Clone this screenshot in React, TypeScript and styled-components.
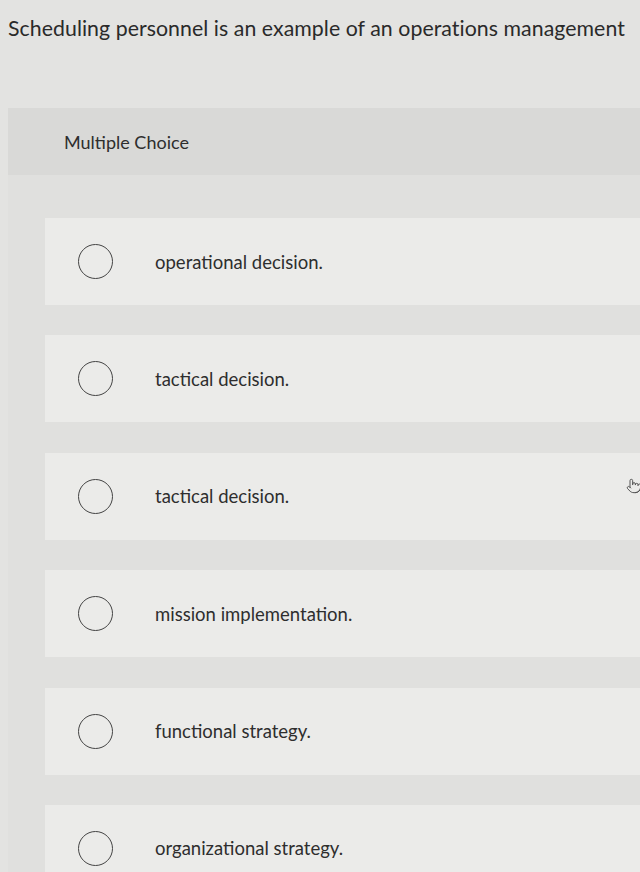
import React from "react";
import styled, { createGlobalStyle } from "styled-components";
import { Pointer } from "lucide-react";

const GlobalStyle = createGlobalStyle`
  html, body {
    margin: 0;
    padding: 0;
    background: #e3e3e1;
  }
  body {
    font-family: Lato, "Open Sans", sans-serif;
    color: #2a2a2a;
  }
`;

const Page = styled.div`
  width: 640px;
  height: 872px;
  overflow: hidden;
  background: #e3e3e1;
`;

const Question = styled.h1`
  margin: 0;
  padding: 14px 0 0 8px;
  height: 108px;
  box-sizing: border-box;
  font-size: 21.3px;
  font-weight: 400;
  line-height: 28px;
  letter-spacing: 0.05px;
  white-space: nowrap;
  color: #2a2a2a;
`;

const Panel = styled.section`
  position: relative;
  margin-left: 8px;
  background: #e0e0de;
`;

const PanelHeader = styled.div`
  display: flex;
  align-items: center;
  height: 67px;
  padding-left: 56px;
  background: #d9d9d7;
  font-size: 18px;
  color: #2e2e2e;
`;

const Spacer = styled.div`
  height: 43px;
`;

const Options = styled.ul`
  list-style: none;
  margin: 0;
  padding: 0 0 0 37px;
  display: flex;
  flex-direction: column;
  gap: 30.4px;
`;

const Option = styled.li`
  display: flex;
  align-items: center;
  height: 87px;
  padding-left: 33px;
  background: #ebebe9;
  cursor: pointer;
`;

const Radio = styled.span`
  flex: none;
  width: 35px;
  height: 35px;
  border: 1.7px solid #444;
  border-radius: 50%;
  box-sizing: border-box;
`;

const Label = styled.span`
  margin-left: 42px;
  font-size: 18.5px;
  color: #2e2e2e;
`;

const Cursor = styled.span`
  position: absolute;
  top: 370px;
  right: -2px;
  color: #555;
`;

const choices = [
  "operational decision.",
  "tactical decision.",
  "tactical decision.",
  "mission implementation.",
  "functional strategy.",
  "organizational strategy.",
];

export default function App() {
  return (
    <Page>
      <GlobalStyle />
      <Question>Scheduling personnel is an example of an operations management</Question>
      <Panel>
        <PanelHeader>Multiple Choice</PanelHeader>
        <Spacer />
        <Options>
          {choices.map((c, i) => (
            <Option key={i}>
              <Radio />
              <Label>{c}</Label>
            </Option>
          ))}
        </Options>
        <Cursor>
          <Pointer size={16} strokeWidth={1.5} />
        </Cursor>
      </Panel>
    </Page>
  );
}
